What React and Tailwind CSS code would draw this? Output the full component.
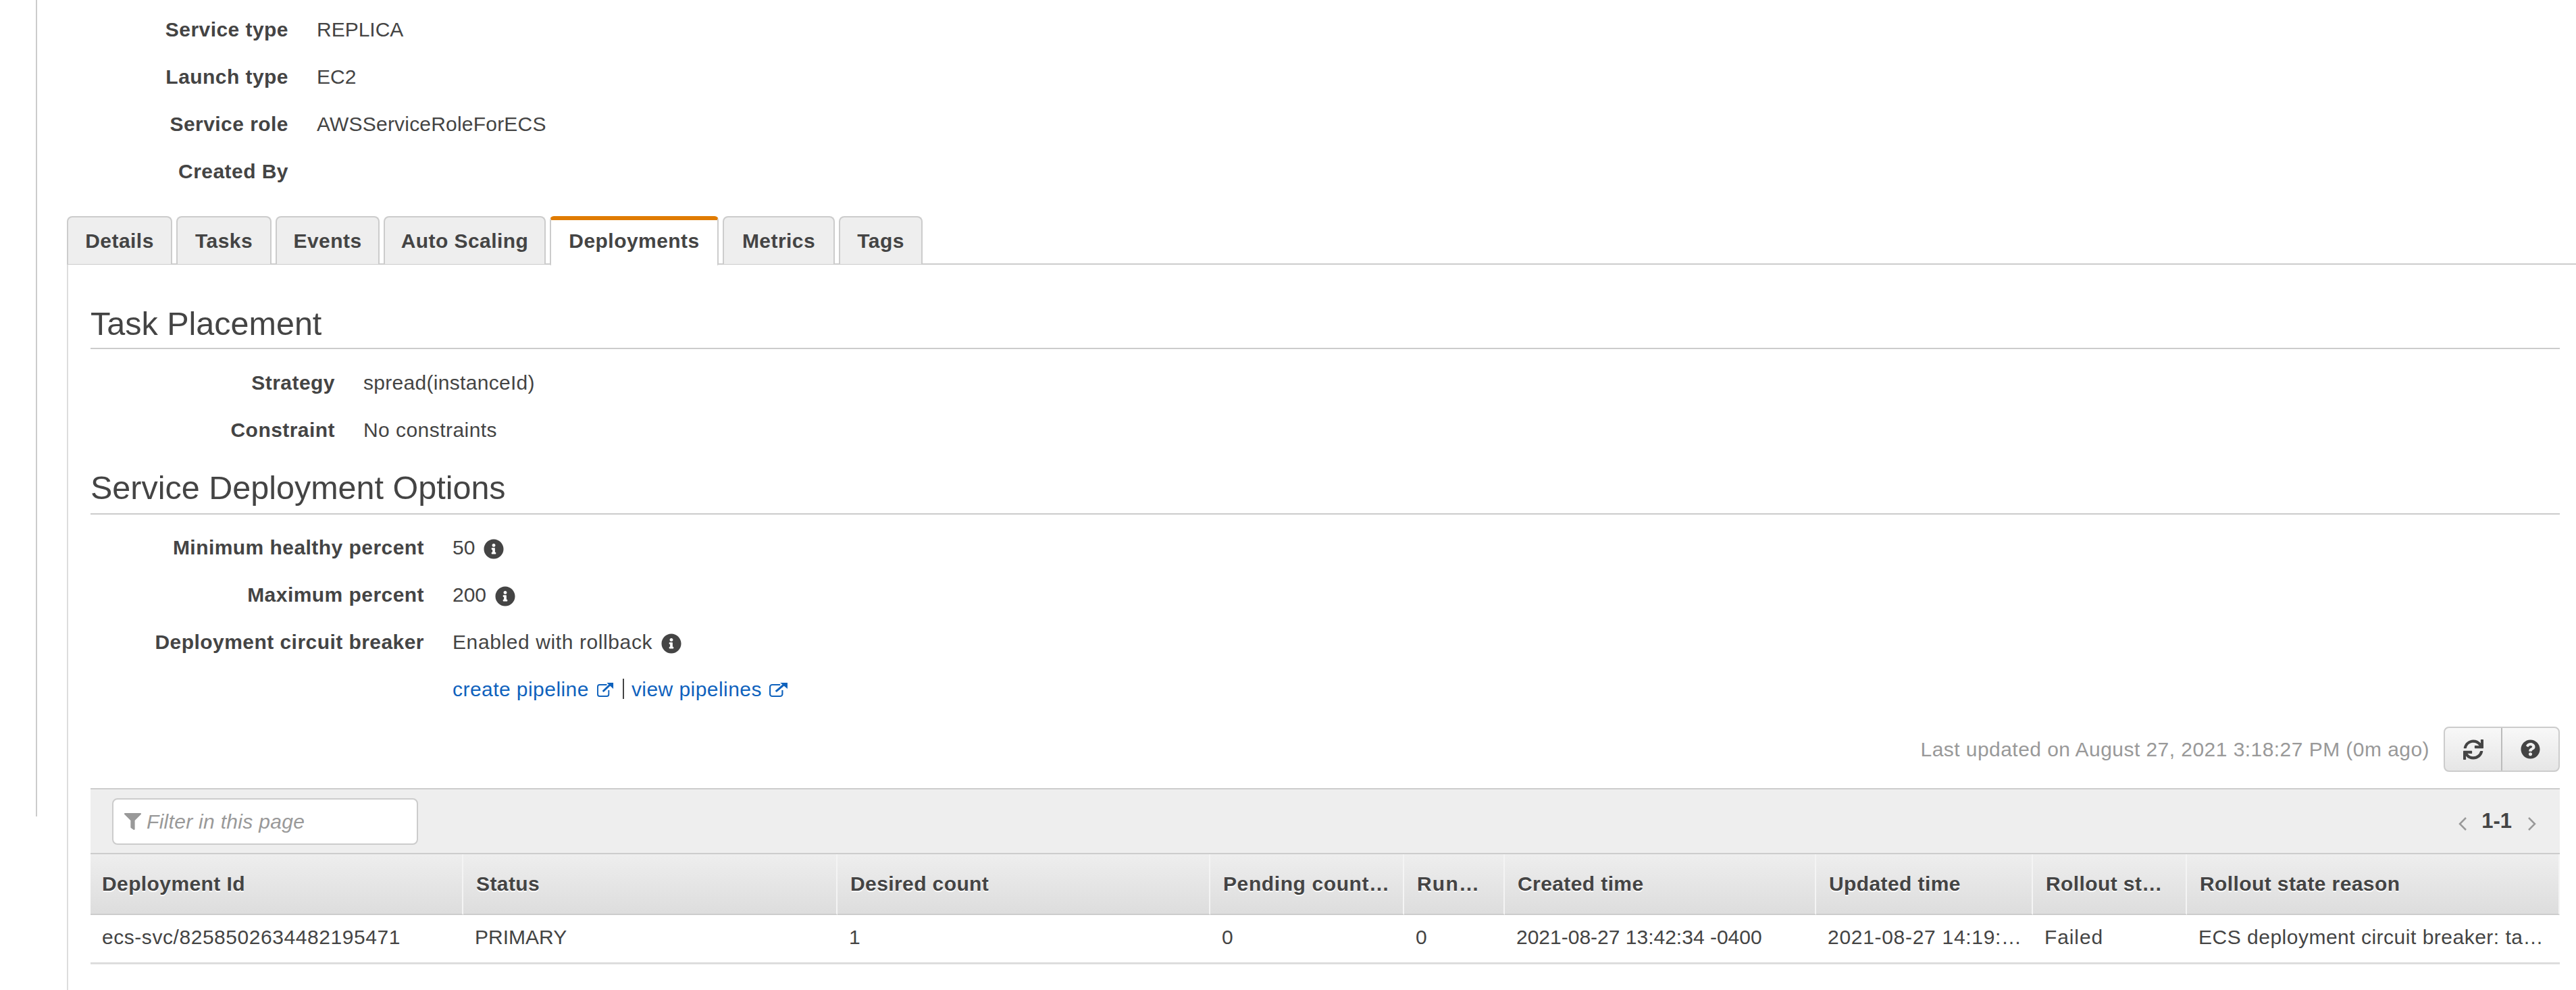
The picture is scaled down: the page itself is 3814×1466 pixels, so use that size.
import React from "react";
import { FaInfoCircle, FaSync, FaQuestionCircle, FaFilter } from "react-icons/fa";

function Pair({ label, labelW, children }) {
  return (
    <div className="flex h-[70px] items-center">
      <div className="shrink-0 text-right font-bold" style={{ width: labelW }}>{label}</div>
      <div className="ml-[42px] flex items-center">{children}</div>
    </div>
  );
}

function Info() {
  return <FaInfoCircle className="ml-[13px] mt-[6px] h-[30px] w-[30px] text-[#444]" />;
}

function Ext({ wide }) {
  return (
    <svg viewBox="0 0 26 22" preserveAspectRatio="none" className={wide ? "ml-[11px] mt-[1px] h-[22px] w-[28px] text-[#0f62bd]" : "ml-[12px] mt-[1px] h-[22px] w-[25px] text-[#0f62bd]"} fill="none" stroke="currentColor" strokeWidth="2">
      <path d="M15 4H4a3 3 0 0 0-3 3v11a3 3 0 0 0 3 3h11a3 3 0 0 0 3-3v-6" />
      <path d="M9 14 21 3" strokeWidth="3" />
      <path d="M15 1h10v9z" fill="currentColor" stroke="none" />
    </svg>
  );
}

function Tab({ children, active, w }) {
  if (active)
    return (
      <div className={`-mb-[2px] flex h-[73px] items-center justify-center rounded-t-[6px] rounded-b-[2px] border-x-2 border-t-[6px] border-x-[#ccc] border-t-[#e07b00] bg-white pb-[6px] font-bold ${w}`}>
        {children}
      </div>
    );
  return (
    <div className={`flex h-[71px] items-center justify-center rounded-t-[8px] border-x-2 border-t-2 border-[#ccc] bg-[#eee] font-bold ${w}`}>
      {children}
    </div>
  );
}

const heads = [
  ["Deployment Id", "tracking-[0.4px]"],
  ["Status", "tracking-[0.4px]"],
  ["Desired count", "tracking-[0.4px]"],
  ["Pending count\u2026", "tracking-[0.6px]"],
  ["Run\u2026", "tracking-[1.2px]"],
  ["Created time", "tracking-[0.4px]"],
  ["Updated time", "tracking-[0.4px]"],
  ["Rollout st\u2026", "tracking-[0.4px]"],
  ["Rollout state reason", "tracking-[0.4px]"],
];
const cells = [
  ["ecs-svc/8258502634482195471", "tracking-[0.55px]"],
  ["PRIMARY", "tracking-normal"],
  ["1", "tracking-normal"],
  ["0", "tracking-normal"],
  ["0", "tracking-normal"],
  ["2021-08-27 13:42:34 -0400", "tracking-normal"],
  ["2021-08-27 14:19:\u2026", "tracking-[0.7px]"],
  ["Failed", "tracking-[0.9px]"],
  ["ECS deployment circuit breaker: ta\u2026", "tracking-[0.5px]"],
];

export default function App() {
  return (
    <div className="flex h-[1466px] overflow-hidden bg-white font-['Liberation_Sans',Arial,sans-serif] text-[30px] tracking-[0.45px] text-[#444]">
      <div className="w-[53px] shrink-0" />
      <div className="h-[1209px] w-[2px] shrink-0 bg-[#ccc]" />
      <div className="flex min-w-0 flex-1 flex-col pl-[44px]">
        <div className="pt-[8px]">
          <Pair label="Service type" labelW="328px"><span className="tracking-normal">REPLICA</span></Pair>
          <Pair label="Launch type" labelW="328px"><span className="tracking-normal">EC2</span></Pair>
          <Pair label="Service role" labelW="328px"><span className="tracking-[0.2px]">AWSServiceRoleForECS</span></Pair>
          <Pair label="Created By" labelW="328px" />
        </div>

        <div className="mt-[32px] flex h-[72px] items-start gap-[6px] border-b-2 border-[#ccc]">
          <Tab w="w-[156px]">Details</Tab>
          <Tab w="w-[141px]">Tasks</Tab>
          <Tab w="w-[154px]">Events</Tab>
          <Tab w="w-[240px]">Auto Scaling</Tab>
          <Tab active w="w-[250px]">Deployments</Tab>
          <Tab w="w-[166px]">Metrics</Tab>
          <Tab w="w-[124px]">Tags</Tab>
        </div>

        <div className="flex-1 border-l-2 border-[#ddd] pl-[33px] pr-[24px]">
          <div className="mt-[60px] h-[65px] border-b-2 border-[#ccc] text-[48.5px] leading-[55px] tracking-normal">Task Placement</div>
          <div className="pt-[14px]">
            <Pair label="Strategy" labelW="362px"><span className="tracking-[0.3px]">spread(instanceId)</span></Pair>
            <Pair label="Constraint" labelW="362px">No constraints</Pair>
          </div>
          <div className="mt-[24px] h-[67px] border-b-2 border-[#ccc] text-[48.5px] leading-[55px] tracking-normal">Service Deployment Options</div>
          <div className="pt-[13px]">
            <Pair label="Minimum healthy percent" labelW="494px"><span className="tracking-normal">50</span> <Info /></Pair>
            <Pair label="Maximum percent" labelW="494px"><span className="tracking-normal">200</span> <Info /></Pair>
            <Pair label="Deployment circuit breaker" labelW="494px"><span className="tracking-[0.6px]">Enabled with rollback</span> <Info /></Pair>
            <Pair label="" labelW="494px">
              <span className="flex items-center text-[#0f62bd]">create pipeline <Ext /></span>
              <span className="ml-[13px] mr-[11px] inline-block h-[30px] w-[2px] bg-[#444]" />
              <span className="flex items-center text-[#0f62bd]">view pipelines <Ext wide /></span>
            </Pair>
          </div>

          <div className="mt-[21px] flex h-[67px] items-center justify-end">
            <span className="tracking-[0.45px] text-[#999]">Last updated on August 27, 2021 3:18:27 PM (0m ago)</span>
            <div className="ml-[21px] flex h-[67px] w-[172px] rounded-[8px] border-2 border-[#ccc] bg-gradient-to-b from-[#f8f8f8] to-[#e6e6e6]">
              <div className="flex flex-1 items-center justify-center border-r-2 border-[#bbb]"><FaSync className="h-[30px] w-[30px]" /></div>
              <div className="flex w-[83px] items-center justify-center"><FaQuestionCircle className="h-[29px] w-[29px]" /></div>
            </div>
          </div>

          <div className="mt-[24px] flex h-[98px] items-center justify-between border-y-2 border-[#ccc] bg-[#eee] pl-[32px] pr-[35px]">
            <div className="flex h-[69px] w-[453px] items-center rounded-[8px] border-2 border-[#ccc] bg-white pl-[16px] italic tracking-[0.3px] text-[#999]">
              <FaFilter className="mr-[8px] h-[25px] w-[25px]" />
              <span>Filter in this page</span>
            </div>
            <div className="flex items-center font-bold tracking-normal">
              <svg viewBox="0 0 12 20" className="mt-[8px] h-[20px] w-[12px] text-[#999]" fill="none" stroke="currentColor" strokeWidth="2.5"><path d="M11 1 2 10l9 9" /></svg>
              <span className="ml-[22px] mr-[24px] text-[31px]">1-1</span>
              <svg viewBox="0 0 12 20" className="mt-[8px] h-[20px] w-[12px] text-[#999]" fill="none" stroke="currentColor" strokeWidth="2.5"><path d="m1 1 9 9-9 9" /></svg>
            </div>
          </div>

          <div className="grid grid-cols-[552px_554px_552px_287px_149px_461px_321px_228px_552px] border-b-[3px] border-[#ddd]">
            {heads.map(([h, t]) => (
              <div key={h} className={`flex h-[90px] items-start overflow-hidden whitespace-nowrap border-r-2 border-b-[2px] border-r-[#f4f4f4] border-b-[#ccc] bg-gradient-to-b from-[#eee] to-[#ddd] pl-[19px] pt-[21px] font-bold [text-shadow:0_2px_0_#fff] first:pl-[17px] last:border-r-[#ccc] ${t}`}>
                {h}
              </div>
            ))}
            {cells.map(([c, t], i) => (
              <div key={i} className={`flex h-[70px] items-center overflow-hidden whitespace-nowrap pb-[6px] pl-[17px] ${t}`}>
                {c}
              </div>
            ))}
          </div>
        </div>
      </div>
    </div>
  );
}
